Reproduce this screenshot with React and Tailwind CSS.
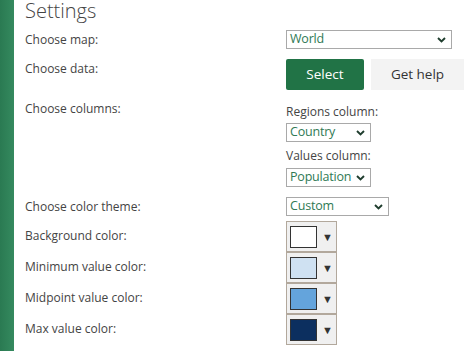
import React from "react"

const font = { fontFamily: '"Open Sans", "Noto Sans", Arial, sans-serif' }

function Chevron() {
  return (
    <svg width="9" height="6" viewBox="0 0 9 6" className="shrink-0">
      <polyline points="1,1 4.5,4.5 8,1" fill="none" stroke="#1f3d2e" strokeWidth="1.9" />
    </svg>
  )
}

function Dropdown({ value, width }) {
  return (
    <div className={`flex h-[19px] items-center justify-between border border-[#a9a9a9] bg-white pl-[3px] pr-[5px] ${width}`}>
      <span className="text-[12.5px] leading-none tracking-[-0.2px] text-[#2f7a55]">{value}</span>
      <Chevron />
    </div>
  )
}

function ColorPicker({ color }) {
  return (
    <div className="flex h-[31px] w-[51px] items-center border border-[#b2a89c] bg-[#f0f0f0] pl-[3px]">
      <div className="h-[22px] w-[27px] border border-[#333]" style={{ background: color }} />
      <span className="ml-[5px] text-[11px] leading-none text-[#333]">▼</span>
    </div>
  )
}

function Row({ label, children, className = "" }) {
  return (
    <div className={`flex ${className}`}>
      <div className="w-[261px] shrink-0 text-[12px] text-[#444]">{label}</div>
      <div>{children}</div>
    </div>
  )
}

export default function App() {
  const colors = [
    ["Background color:", "#ffffff"],
    ["Minimum value color:", "#cfe1f2"],
    ["Midpoint value color:", "#64a4dc"],
    ["Max value color:", "#0c2f5f"],
  ]

  return (
    <div className="flex h-[351px] w-[474px] overflow-hidden bg-white" style={font}>
      <div className="w-[14px] shrink-0 bg-gradient-to-r from-[#2a7a52] to-[#358a5f]" />
      <div className="flex-1 pl-[11px]">
        <div className="pt-[1px] text-[20px] font-light leading-[20px] text-[#444]">Settings</div>

        <Row label="Choose map:" className="mt-[9px] items-center">
          <Dropdown value="World" width="w-[166px]" />
        </Row>

        <Row label={<div className="pt-[1px]">Choose data:</div>} className="mt-[10px]">
          <div className="flex gap-[7px]">
            <button className="h-[31px] w-[78px] rounded-[2px] bg-[#217346] text-[13.5px] text-white">Select</button>
            <button className="h-[31px] w-[93px] bg-[#f3f3f3] text-[13.5px] text-[#333]">Get help</button>
          </div>
        </Row>

        <Row label={<div className="mt-[-4px]">Choose columns:</div>} className="mt-[14px]">
          <div className="text-[12px] leading-[16px] text-[#444]">Regions column:</div>
          <div className="mt-[3px]">
            <Dropdown value="Country" width="w-[85px]" />
          </div>
          <div className="mt-[6px] text-[12px] leading-[16px] text-[#444]">Values column:</div>
          <div className="mt-[4px]">
            <Dropdown value="Population" width="w-[85px]" />
          </div>
        </Row>

        <Row label="Choose color theme:" className="mt-[10px] items-center">
          <Dropdown value="Custom" width="w-[103px]" />
        </Row>

        <div className="mt-[5px]">
          {colors.map(([label, color]) => (
            <Row key={label} label={<div className="mt-[-2px]">{label}</div>} className="items-center">
              <ColorPicker color={color} />
            </Row>
          ))}
        </div>
      </div>
    </div>
  )
}
